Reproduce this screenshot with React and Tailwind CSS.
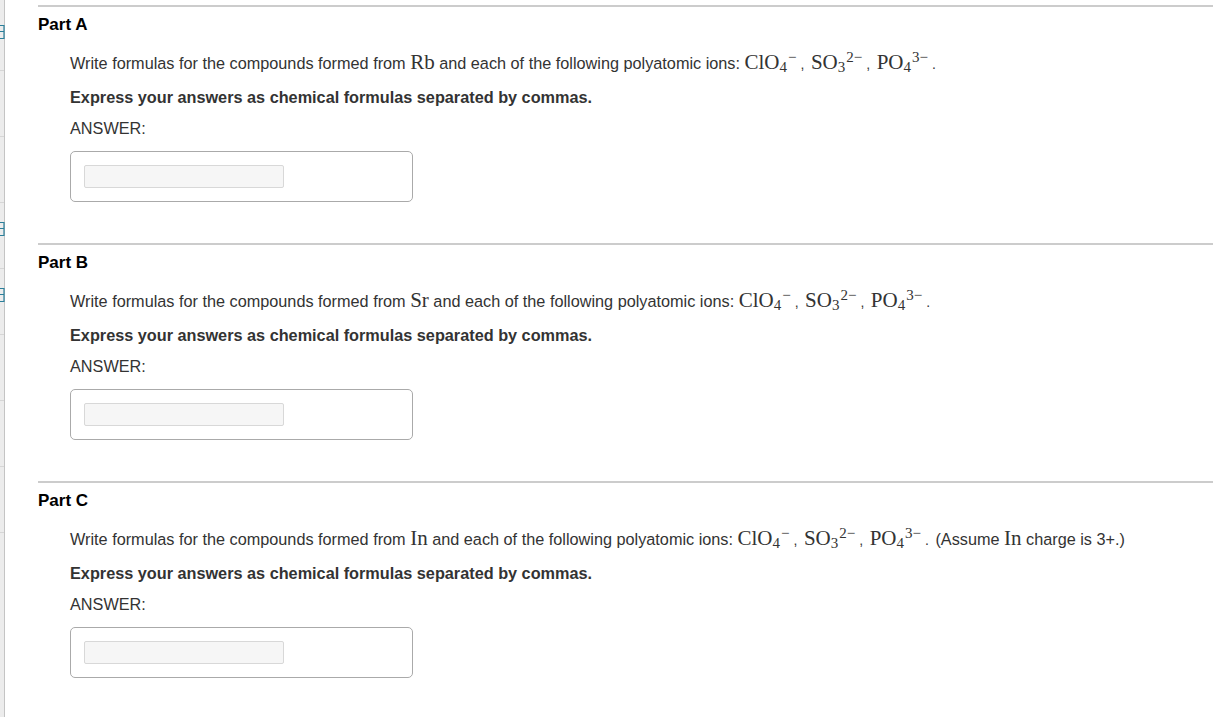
import React from "react";

const serif = "font-['Liberation_Serif','Times_New_Roman',serif]";

function Sub({ children }) {
  return <span className={`${serif} text-[15px] leading-none align-[-3px]`}>{children}</span>;
}
function Sup({ children }) {
  return <span className={`${serif} text-[15px] leading-none align-[7px] ml-px`}>{children}</span>;
}
function El({ children }) {
  return <span className={`${serif} text-[21px]`}>{children}</span>;
}
function Comma({ children }) {
  return <span className="text-[14px] ml-[4px] mr-[2px]">{children}</span>;
}

function Ions() {
  return (
    <>
      <El>ClO</El>
      <Sub>4</Sub>
      <Sup>−</Sup>
      <Comma>,</Comma>{" "}
      <El>SO</El>
      <Sub>3</Sub>
      <Sup>2−</Sup>
      <Comma>,</Comma>{" "}
      <El>PO</El>
      <Sub>4</Sub>
      <Sup>3−</Sup>
      <Comma>.</Comma>
    </>
  );
}

function Section({ title, element, extra }) {
  return (
    <section className="border-t-2 border-[#cccccc] pt-2 pb-[41px]">
      <h2 className="text-[17px] leading-[20px] font-bold text-black">{title}</h2>
      <div className="pl-[32px] text-[16.25px] text-[#333333]">
        <p className="mt-[15px] h-[24px] leading-[24px] whitespace-nowrap">
          Write formulas for the compounds formed from <El>{element}</El> and each of the following polyatomic ions:{" "}
          <Ions />
          {extra && (
            <>
              {" "}(Assume <El>{element}</El> charge is 3+.)
            </>
          )}
        </p>
        <p className="mt-[13px] leading-[20px] font-bold">Express your answers as chemical formulas separated by commas.</p>
        <p className="mt-[11px] leading-[20px]">ANSWER:</p>
        <div className="mt-[13px] w-[343px] h-[51px] rounded-[5px] border border-[#aaaaaa] pl-[13px] pt-[13px]">
          <div className="w-[200px] h-[23px] rounded-[2px] border border-[#d8d8d8] bg-[#f6f6f6]" />
        </div>
      </div>
    </section>
  );
}

function Marker() {
  return (
    <svg width="5" height="14" viewBox="0 0 5 14" className="block">
      <path d="M0 0.5 H4 M0 6.5 H4 M0 13.5 H4 M4 0 V14" stroke="#2a7f9a" strokeWidth="1.2" fill="none" />
    </svg>
  );
}

export default function App() {
  const lines = [70, 136, 202, 268, 334, 400, 466, 532];
  return (
    <div className="flex min-h-[717px] bg-white font-['Liberation_Sans',Arial,sans-serif]">
      <div className="relative w-[5px] shrink-0 bg-[#ececec] border-r border-[#c4c4c4]">
        {lines.map((y) => (
          <div key={y} className="absolute left-0 w-[4px] h-px bg-[#d6d6d6]" style={{ top: y }} />
        ))}
        {[25, 222, 288].map((y) => (
          <div key={y} className="absolute left-0" style={{ top: y }}>
            <Marker />
          </div>
        ))}
      </div>
      <div className="flex-1 pl-[33px] pt-[5px]">
        <Section title="Part A" element="Rb" />
        <Section title="Part B" element="Sr" />
        <Section title="Part C" element="In" extra />
      </div>
    </div>
  );
}
